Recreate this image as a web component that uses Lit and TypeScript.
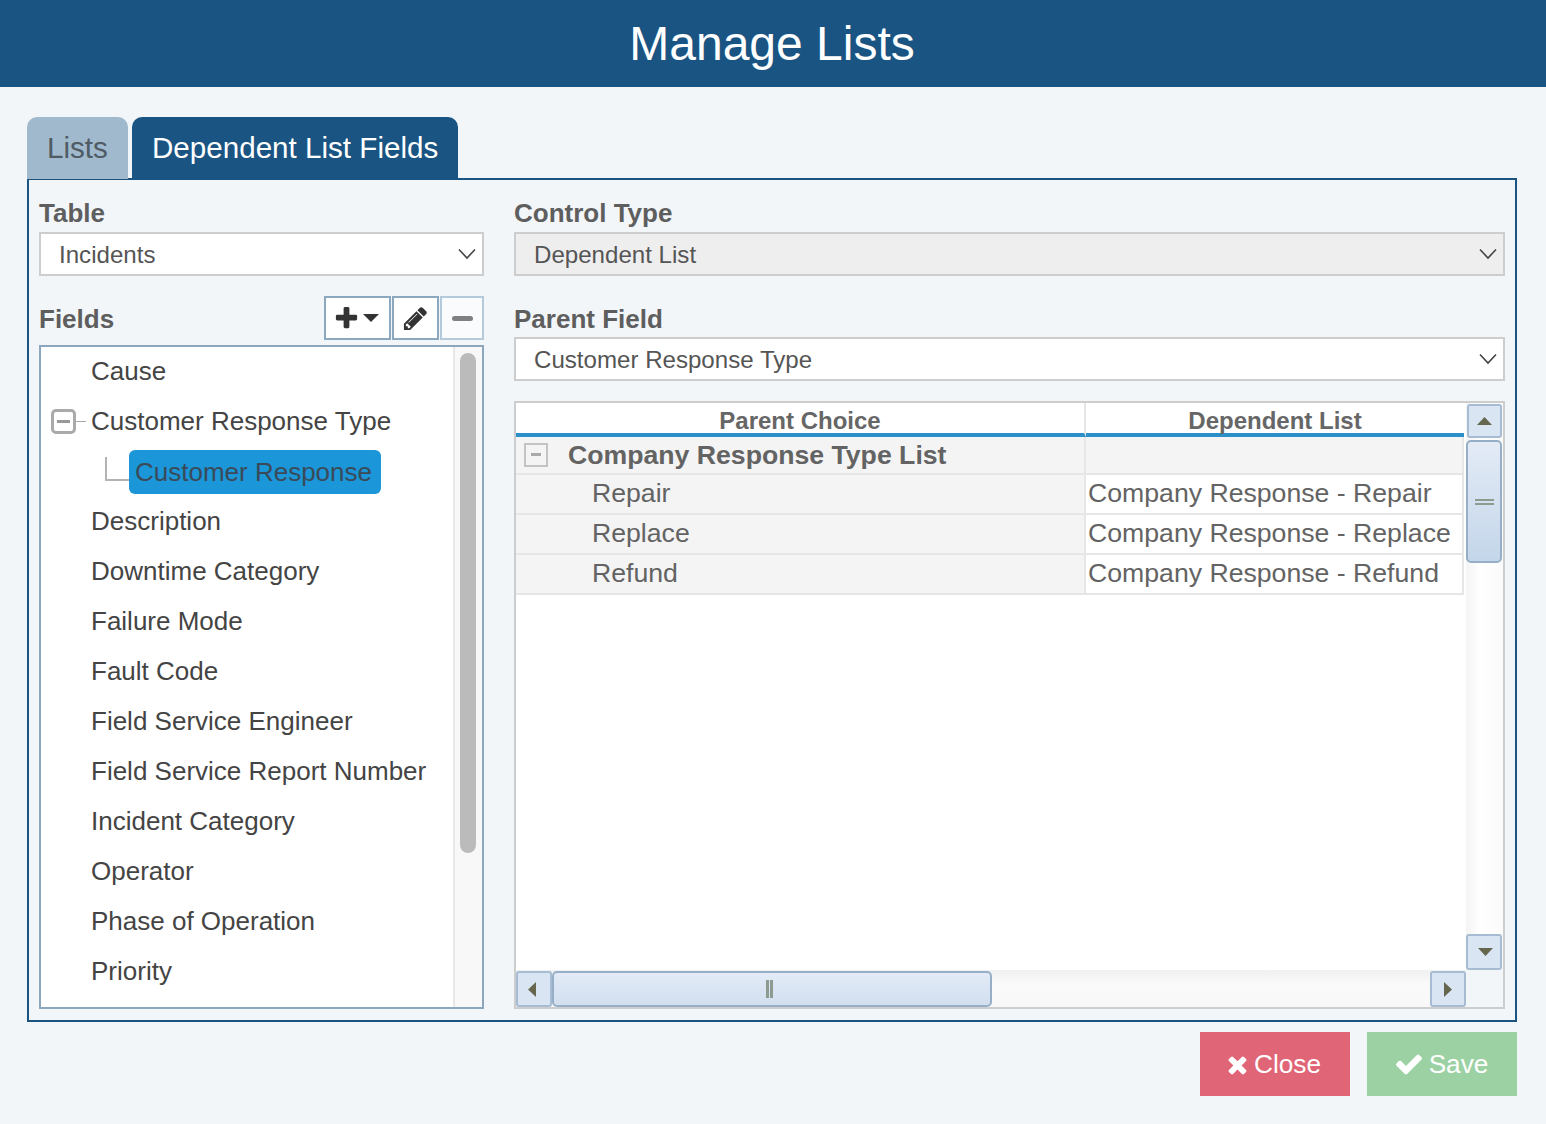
import { LitElement, html, css, svg } from 'lit';
import { customElement } from 'lit/decorators.js';

const fa = (d: string, size: number, color = 'currentColor') => html`
  <svg width=${size} height=${size} viewBox="0 0 1792 1792" fill=${color}>${svg`<path d=${d}></path>`}</svg>
`;

const PLUS = 'M1600 736v192q0 40-28 68t-68 28h-416v416q0 40-28 68t-68 28h-192q-40 0-68-28t-28-68v-416h-416q-40 0-68-28t-28-68v-192q0-40 28-68t68-28h416v-416q0-40 28-68t68-28h192q40 0 68 28t28 68v416h416q40 0 68 28t28 68z';
const PENCIL = 'M491 1536l91-91-235-235-91 91v107h128v128h107zm523-928q0-22-22-22-10 0-17 7l-542 542q-7 7-7 17 0 22 22 22 10 0 17-7l542-542q7-7 7-17zm-54-192l416 416-832 832h-416v-416zm683 96q0 53-37 90l-166 166-416-416 166-165q36-38 90-38 53 0 91 38l235 234q37 39 37 91z';
const TIMES = 'M1490 1322q0 40-28 68l-136 136q-28 28-68 28t-68-28l-294-294-294 294q-28 28-68 28t-68-28l-136-136q-28-28-28-68t28-68l294-294-294-294q-28-28-28-68t28-68l136-136q28-28 68-28t68 28l294 294 294-294q28-28 68-28t68 28l136 136q28 28 28 68t-28 68l-294 294 294 294q28 28 28 68z';
const CHECK = 'M1671 566q0 40-28 68l-724 724-136 136q-28 28-68 28t-68-28l-136-136-362-362q-28-28-28-68t28-68l136-136q28-28 68-28t68 28l294 295 656-657q28-28 68-28t68 28l136 136q28 28 28 68z';

const chevron = html`
  <svg class="chev" width="18" height="12" viewBox="0 0 18 12" fill="none" stroke="#444" stroke-width="1.6">
    <path d="M1 1.5 L9 10 L17 1.5"></path>
  </svg>
`;

const tri = (dir: 'up' | 'down' | 'left' | 'right') => {
  const pts = { up: '0,8 15,8 7.5,0', down: '0,0 15,0 7.5,8', left: '8,0 8,15 0,7.5', right: '0,0 0,15 8,7.5' }[dir];
  const w = dir === 'up' || dir === 'down' ? 15 : 8;
  const h = dir === 'up' || dir === 'down' ? 8 : 15;
  return html`<svg width=${w} height=${h} viewBox="0 0 ${w} ${h}" fill="#66664f">${svg`<polygon points=${pts}></polygon>`}</svg>`;
};

@customElement('app-root')
export class AppRoot extends LitElement {
  static styles = css`
    :host {
      display: block;
      height: 1124px;
      background: #f2f6f9;
      font-family: "Liberation Sans", Arial, sans-serif;
      color: #3f3f3f;
    }
    * { box-sizing: border-box; }

    .title {
      height: 87px;
      background: #1a5482;
      color: #fff;
      font-size: 48px;
      line-height: 87px;
      text-align: center;
      padding-right: 2px;
    }

    .content { padding: 30px 29px 0 27px; }

    .tabs { display: flex; gap: 4px; height: 61px; }
    .tab {
      height: 62px;
      padding: 13px 20px 0;
      font-size: 29.6px;
      line-height: 36px;
      border-radius: 10px 10px 0 0;
      white-space: nowrap;
    }
    .tab.off { width: 101px; background: #a0b9cd; color: #4f5b65; }
    .tab.on { width: 326px; background: #1a5482; color: #fff; }

    .panel {
      height: 844px;
      border: 2px solid #1a5482;
      padding: 18px 10px 11px 10px;
      display: grid;
      grid-template-columns: 445px 991px;
      column-gap: 30px;
    }
    .col { display: flex; flex-direction: column; min-width: 0; }

    .label {
      height: 34px;
      padding-top: 1px;
      font-size: 26px;
      line-height: 29px;
      font-weight: 700;
      color: #5e5e5e;
      flex: none;
    }
    .label.parent-label { margin-top: 28px; }
    .select {
      height: 44px;
      border: 2px solid #cdcdcd;
      background: #fff;
      padding: 2px 6px 0 18px;
      display: flex;
      align-items: center;
      justify-content: space-between;
      font-size: 24.1px;
      color: #555;
      flex: none;
    }
    .select.disabled { background: #eee; }
    .select.parent-select { margin-top: -1px; }
    .chev { flex: none; margin-top: -2px; }

    .fields-head {
      display: flex;
      justify-content: space-between;
      height: 44px;
      margin-top: 20px;
      margin-bottom: 5px;
      flex: none;
    }
    .fields-head .label { padding-top: 9px; height: auto; }
    .btns { display: flex; gap: 1px; }
    .btn {
      height: 44px;
      border: 2px solid #8ba8bf;
      background: #fff;
      display: flex;
      align-items: center;
      justify-content: center;
      color: #333;
    }
    .btn.add { width: 67px; gap: 3px; padding-right: 4px; }
    .btn.edit { width: 47px; }
    .btn.del { width: 44px; border-color: #b4cadb; background: #f9fbfc; }
    .dash { display: block; width: 21px; height: 5px; border-radius: 2.5px; background: #808080; }
    .caret {
      width: 0;
      height: 0;
      border-left: 8px solid transparent;
      border-right: 8px solid transparent;
      border-top: 8px solid #333;
    }

    .tree {
      flex: 1;
      border: 2px solid #8ba6bd;
      background: #fff;
      display: flex;
      overflow: hidden;
    }
    .tree-items { flex: 1; min-width: 0; }
    .node {
      height: 50px;
      display: flex;
      align-items: center;
      padding: 0 0 2px 50px;
      font-size: 26px;
      color: #444;
      white-space: nowrap;
    }
    .node.parent { padding-left: 10px; }
    .toggle {
      width: 25px;
      height: 25px;
      border: 3px solid #aaa;
      border-radius: 5px;
      display: flex;
      align-items: center;
      justify-content: center;
      flex: none;
    }
    .toggle i { display: block; width: 13px; height: 3px; background: #999; }
    .stub { width: 10px; height: 1px; background: #a9a9a9; margin-right: 5px; flex: none; }
    .node.child { padding: 0 0 1px 64px; }
    .elbow {
      width: 24px;
      height: 24px;
      margin-top: -6px;
      border-left: 2px solid #b3b3b3;
      border-bottom: 2px solid #b3b3b3;
      flex: none;
    }
    .selected {
      height: 44px;
      line-height: 45px;
      padding: 0 9px 0 6px;
      background: #1b96d8;
      border-radius: 6px;
      color: #3a4a58;
    }
    .tree-scroll {
      width: 29px;
      flex: none;
      background: #f8f8f8;
      border-left: 2px solid #e8e8e8;
      padding: 6px 5px 0;
    }
    .tree-thumb { height: 500px; width: 16px; border-radius: 8px; background: #bbb; }

    .grid-wrap {
      margin-top: 20px;
      height: 608px;
      border: 2px solid #cdcdcd;
      background: #fff;
      display: grid;
      grid-template-columns: 1fr 37px;
      grid-template-rows: 1fr 37px;
      flex: none;
    }
    .rows { min-width: 0; }
    .grow {
      display: grid;
      grid-template-columns: 570px 378px;
      width: 948px;
      font-size: 26.65px;
      color: #636363;
    }
    .cell {
      height: 40px;
      border-bottom: 2px solid #e6e6e6;
      line-height: 36px;
      white-space: nowrap;
    }
    .cell.name { background: #f4f4f4; padding-left: 76px; border-right: 2px solid #e6e6e6; }
    .cell.value { padding-left: 2px; background: #fff; border-right: 2px solid #e6e6e6; }
    .ghead .cell {
      height: 34px;
      border-bottom: 4px solid #2b90c8;
      text-align: center;
      font-size: 24px;
      font-weight: 700;
      line-height: 35px;
      background: #fff;
      padding: 0;
      color: #666;
    }
    .ghead .cell:first-child { border-right: 2px solid #e6e6e6; }
    .group .cell { height: 38px; background: #f4f4f4; }
    .group .cell.name {
      padding: 0 0 1px 8px;
      display: flex;
      align-items: center;
      gap: 20px;
      font-weight: 700;
    }
    .gtoggle {
      width: 24px;
      height: 24px;
      border: 2px solid #c4c4c4;
      display: flex;
      align-items: center;
      justify-content: center;
      flex: none;
    }
    .gtoggle i { display: block; width: 10px; height: 3px; background: #aaa; }

    .arrow {
      display: flex;
      align-items: center;
      justify-content: center;
      background: #d9e5f3;
      border: 2px solid #a7bcd2;
      border-radius: 3px;
      flex: none;
    }
    .vbar {
      display: flex;
      flex-direction: column;
      background: linear-gradient(90deg, #f4f4f4, #fff 40%, #fafafa);
    }
    .vbar .arrow { width: 35px; height: 34px; margin: 1px 0 0 1px; }
    .vbar .arrow.down { width: 36px; height: 36px; margin: auto 0 0 0; padding-left: 3px; }
    .vthumb {
      height: 123px;
      margin: 2px 0 0 0;
      width: 36px;
      border: 2px solid #97afc6;
      border-radius: 5px;
      background: linear-gradient(180deg, #e3ebf6, #c4d6ea);
      display: flex;
      align-items: center;
      justify-content: center;
      flex: none;
    }
    .vthumb i {
      display: block;
      width: 19px;
      height: 6px;
      border-top: 2px solid #8d9a8f;
      border-bottom: 2px solid #8d9a8f;
    }
    .hbar {
      display: flex;
      background: linear-gradient(180deg, #f0f0f0, #fafafa 40%, #f8f8f8);
    }
    .hbar .arrow { width: 36px; height: 36px; margin-top: 1px; }
    .hbar .arrow.left { padding-right: 4px; }
    .hthumb {
      width: 440px;
      height: 36px;
      margin-top: 1px;
      border: 2px solid #97afc6;
      border-radius: 5px;
      background: linear-gradient(180deg, #e2ebf7, #d2dfef);
      display: flex;
      align-items: center;
      justify-content: center;
      padding-right: 6px;
      flex: none;
    }
    .hthumb i {
      display: block;
      width: 7px;
      height: 18px;
      border-left: 3px solid #8d9a8f;
      border-right: 3px solid #8d9a8f;
    }
    .hbar .arrow.right { margin-left: auto; }
    .corner { background: #f2f6f9; }

    .actions {
      display: flex;
      justify-content: flex-end;
      gap: 17px;
      margin-top: 10px;
    }
    .action {
      width: 150px;
      height: 64px;
      display: flex;
      align-items: center;
      justify-content: center;
      gap: 3px;
      color: #fff;
      font-size: 26.2px;
    }
    .action.close { background: #e06577; padding-right: 5px; }
    .action.save { background: #9cd1a4; gap: 5px; padding-right: 2px; }
  `;

  private fields = [
    'Description',
    'Downtime Category',
    'Failure Mode',
    'Fault Code',
    'Field Service Engineer',
    'Field Service Report Number',
    'Incident Category',
    'Operator',
    'Phase of Operation',
    'Priority',
  ];

  private choices = [
    ['Repair', 'Company Response - Repair'],
    ['Replace', 'Company Response - Replace'],
    ['Refund', 'Company Response - Refund'],
  ];

  render() {
    return html`
      <div class="title">Manage Lists</div>
      <div class="content">
        <div class="tabs">
          <div class="tab off">Lists</div>
          <div class="tab on">Dependent List Fields</div>
        </div>
        <div class="panel">
          <div class="col">
            <div class="label">Table</div>
            <div class="select">Incidents ${chevron}</div>
            <div class="fields-head">
              <div class="label">Fields</div>
              <div class="btns">
                <div class="btn add">${fa(PLUS, 27)}<span class="caret"></span></div>
                <div class="btn edit">${fa(PENCIL, 27)}</div>
                <div class="btn del"><i class="dash"></i></div>
              </div>
            </div>
            <div class="tree">
              <div class="tree-items">
                <div class="node">Cause</div>
                <div class="node parent">
                  <span class="toggle"><i></i></span><span class="stub"></span>Customer Response Type
                </div>
                <div class="node child">
                  <span class="elbow"></span><span class="selected">Customer Response</span>
                </div>
                ${this.fields.map((f) => html`<div class="node">${f}</div>`)}
              </div>
              <div class="tree-scroll"><div class="tree-thumb"></div></div>
            </div>
          </div>
          <div class="col">
            <div class="label">Control Type</div>
            <div class="select disabled">Dependent List ${chevron}</div>
            <div class="label parent-label">Parent Field</div>
            <div class="select parent-select">Customer Response Type ${chevron}</div>
            <div class="grid-wrap">
              <div class="rows">
                <div class="grow ghead">
                  <div class="cell">Parent Choice</div>
                  <div class="cell">Dependent List</div>
                </div>
                <div class="grow group">
                  <div class="cell name"><span class="gtoggle"><i></i></span>Company Response Type List</div>
                  <div class="cell value"></div>
                </div>
                ${this.choices.map(
                  ([c, d]) => html`
                    <div class="grow">
                      <div class="cell name">${c}</div>
                      <div class="cell value">${d}</div>
                    </div>
                  `,
                )}
              </div>
              <div class="vbar">
                <div class="arrow">${tri('up')}</div>
                <div class="vthumb"><i></i></div>
                <div class="arrow down">${tri('down')}</div>
              </div>
              <div class="hbar">
                <div class="arrow left">${tri('left')}</div>
                <div class="hthumb"><i></i></div>
                <div class="arrow right">${tri('right')}</div>
              </div>
              <div class="corner"></div>
            </div>
          </div>
        </div>
        <div class="actions">
          <div class="action close">${fa(TIMES, 27)}Close</div>
          <div class="action save">${fa(CHECK, 30)}Save</div>
        </div>
      </div>
    `;
  }
}
